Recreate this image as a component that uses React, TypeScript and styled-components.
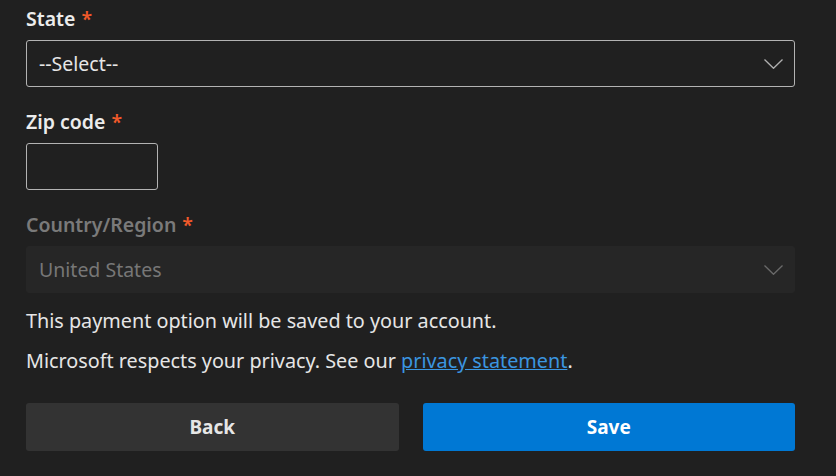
import React from 'react'
import styled, { createGlobalStyle } from 'styled-components'

const GlobalStyle = createGlobalStyle`
  html, body {
    margin: 0;
    padding: 0;
    background: #202020;
  }
  body {
    font-family: 'Noto Sans', 'Open Sans', sans-serif;
    color: #e6e6e6;
  }
`

const Form = styled.div`
  width: 769px;
  padding: 0 41px 0 26px;
  display: flex;
  flex-direction: column;
`

const Field = styled.div<{ $last?: boolean }>`
  display: flex;
  flex-direction: column;
  margin-bottom: ${(p) => (p.$last ? '8px' : '16px')};
`

const Label = styled.div<{ $disabled?: boolean }>`
  height: 38px;
  line-height: 37px;
  margin-bottom: 2px;
  font-size: 19.5px;
  font-weight: 600;
  color: ${(p) => (p.$disabled ? '#7a7a7a' : '#ececec')};
`

const Required = styled.span`
  color: #f1592a;
  margin-left: 6px;
`

const SelectBox = styled.div<{ $disabled?: boolean }>`
  box-sizing: border-box;
  height: 47px;
  display: flex;
  align-items: center;
  justify-content: space-between;
  padding: 0 11px 0 12px;
  border-radius: 3px;
  border: 1px solid ${(p) => (p.$disabled ? '#262626' : '#b3b3b3')};
  background: ${(p) => (p.$disabled ? '#262626' : 'transparent')};
  color: ${(p) => (p.$disabled ? '#777777' : '#e6e6e6')};
  font-size: 19.5px;
`

const TextInput = styled.div`
  box-sizing: border-box;
  width: 132px;
  height: 47px;
  border: 1px solid #b3b3b3;
  border-radius: 3px;
`

const Note = styled.p`
  margin: 0;
  font-size: 19.8px;
  line-height: 40px;
  color: #e6e6e6;
`

const Link = styled.a`
  color: #3b96e0;
  text-decoration: underline;
`

const Buttons = styled.div`
  display: grid;
  grid-template-columns: 1fr 1fr;
  gap: 24px;
  margin-top: 22px;
`

const Button = styled.button<{ $primary?: boolean }>`
  height: 48px;
  border: none;
  border-radius: 3px;
  font-family: inherit;
  font-size: 19px;
  font-weight: 700;
  background: ${(p) => (p.$primary ? '#0078d4' : '#333333')};
  color: ${(p) => (p.$primary ? '#ffffff' : '#e6e6e6')};
`

const Chevron = ({ color }: { color: string }) => (
  <svg width="19" height="10" viewBox="0 0 19 10" fill="none">
    <polyline points="0.5,0.5 9.5,9.3 18.5,0.5" stroke={color} strokeWidth="1.3" />
  </svg>
)

const App = () => (
  <>
    <GlobalStyle />
    <Form>
      <Field>
        <Label>
          State<Required>*</Required>
        </Label>
        <SelectBox>
          <span>--Select--</span>
          <Chevron color="#b0b0b0" />
        </SelectBox>
      </Field>
      <Field>
        <Label>
          Zip code<Required>*</Required>
        </Label>
        <TextInput />
      </Field>
      <Field $last>
        <Label $disabled>
          Country/Region<Required>*</Required>
        </Label>
        <SelectBox $disabled>
          <span>United States</span>
          <Chevron color="#6a6a6a" />
        </SelectBox>
      </Field>
      <Note>This payment option will be saved to your account.</Note>
      <Note>
        Microsoft respects your privacy. See our <Link href="#">privacy statement</Link>.
      </Note>
      <Buttons>
        <Button>Back</Button>
        <Button $primary>Save</Button>
      </Buttons>
    </Form>
  </>
)

export default App
